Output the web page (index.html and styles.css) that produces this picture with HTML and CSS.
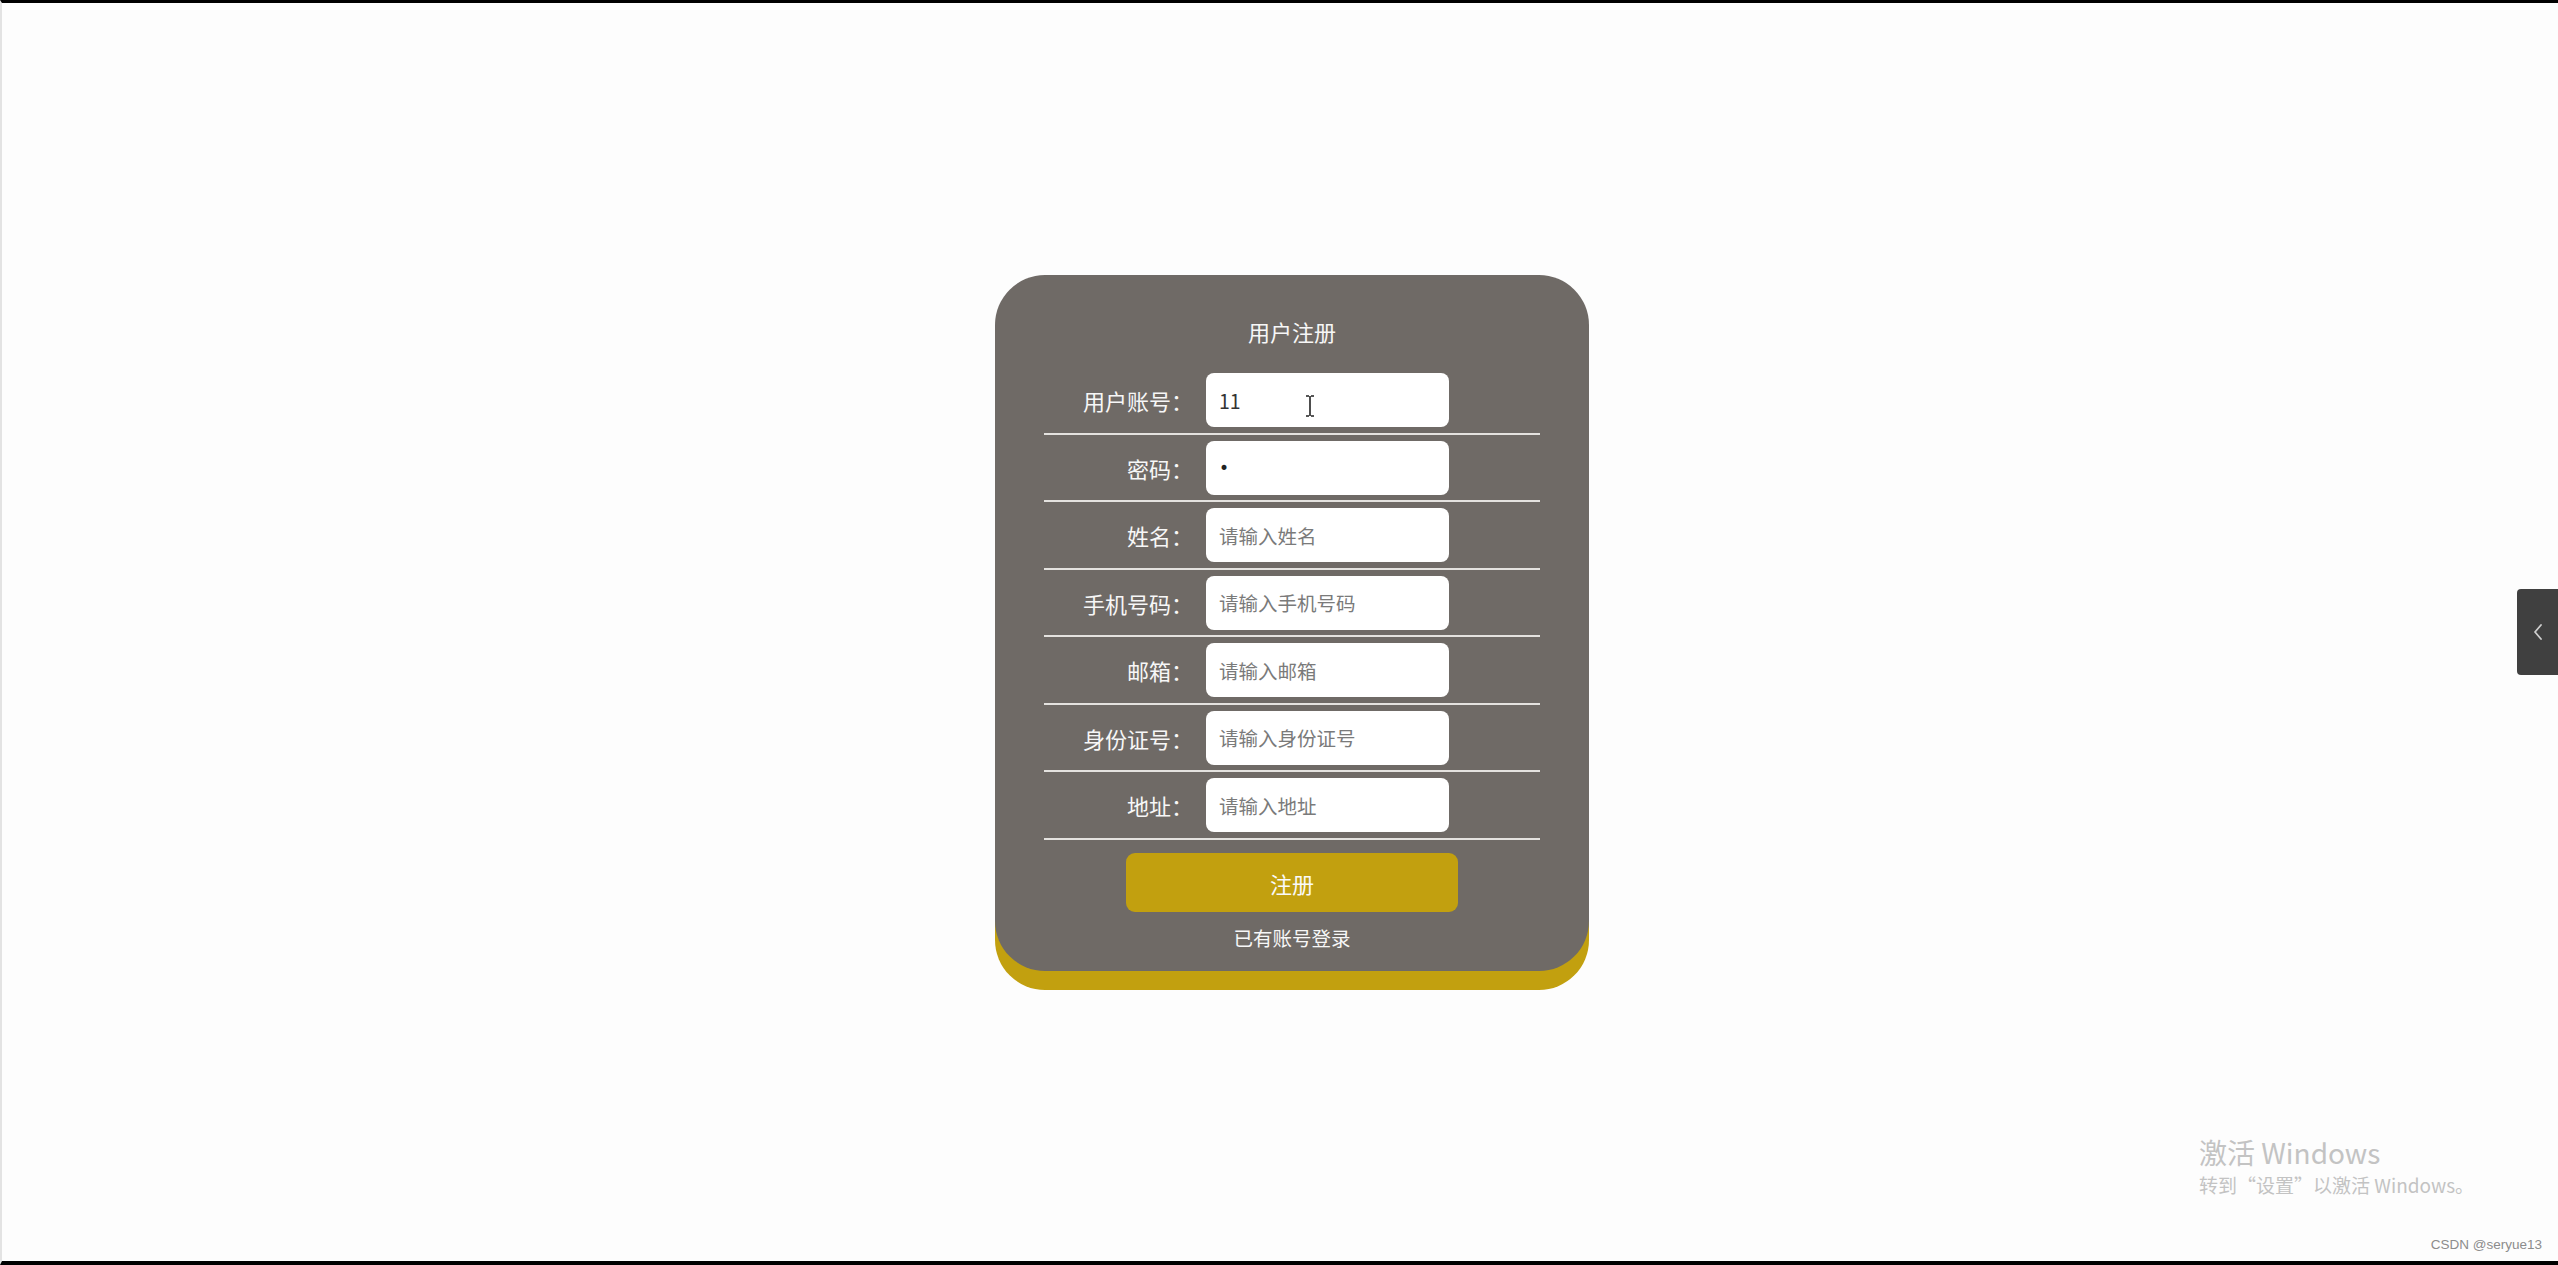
FILE: index.html
```html
<!DOCTYPE html>
<html lang="zh-CN">
<head>
<meta charset="utf-8">
<title>用户注册</title>
<link rel="stylesheet" href="styles.css">
</head>
<body>
<div class="screen">
  <div class="card">
    <h1 class="title">用户注册</h1>
    <form class="form">
      <div class="row">
        <label class="label">用户账号：</label>
        <div class="field">
          <input class="input" type="text" value="11">
          <svg class="ibeam" width="10" height="22" viewBox="0 0 10 22"><path d="M1 1h3M6 1h3M5 1v20M1 21h3M6 21h3" stroke="#222" stroke-width="1.6" fill="none"/></svg>
        </div>
      </div>
      <div class="row">
        <label class="label">密码：</label>
        <div class="field"><input class="input input-pass" type="password" value="1"></div>
      </div>
      <div class="row">
        <label class="label">姓名：</label>
        <div class="field"><input class="input" type="text" placeholder="请输入姓名"></div>
      </div>
      <div class="row">
        <label class="label">手机号码：</label>
        <div class="field"><input class="input" type="text" placeholder="请输入手机号码"></div>
      </div>
      <div class="row">
        <label class="label">邮箱：</label>
        <div class="field"><input class="input" type="text" placeholder="请输入邮箱"></div>
      </div>
      <div class="row">
        <label class="label">身份证号：</label>
        <div class="field"><input class="input" type="text" placeholder="请输入身份证号"></div>
      </div>
      <div class="row">
        <label class="label">地址：</label>
        <div class="field"><input class="input" type="text" placeholder="请输入地址"></div>
      </div>
      <button class="submit" type="button">注册</button>
      <p class="login">已有账号登录</p>
    </form>
  </div>

  <div class="side-tab">
    <svg width="12" height="18" viewBox="0 0 12 18"><path d="M9 2L3 9l6 7" stroke="#cfcfcf" stroke-width="1.8" fill="none" stroke-linecap="round" stroke-linejoin="round"/></svg>
  </div>

  <div class="activate">
    <div class="act-title">激活 Windows</div>
    <div class="act-sub">转到“设置”以激活 Windows。</div>
  </div>

  <div class="csdn">CSDN @seryue13</div>
</div>
</body>
</html>
```
FILE: styles.css
```css
html, body {
  margin: 0;
  padding: 0;
  overflow: hidden;
}

body {
  font-family: "Noto Sans CJK SC", "Noto Sans", sans-serif;
}

.screen {
  position: relative;
  box-sizing: border-box;
  height: 1265px;
  border-top: 3px solid #000;
  border-bottom: 4px solid #000;
  border-left: 2px solid #e3e3e3;
  background: #fdfdfd;
  padding-top: 272px;
}

.card {
  box-sizing: border-box;
  width: 594px;
  margin-left: 993px;
  padding: 41px 49px 18px;
  background: #6f6a66;
  border-radius: 50px;
  box-shadow: 0 19px 0 0 #c2a00f;
  color: #f7f7f7;
}

.title {
  margin: 0 0 27px;
  font-size: 22px;
  font-weight: normal;
  line-height: 30px;
  text-align: center;
}

.form {
  display: flex;
  flex-direction: column;
}

.row {
  display: flex;
  align-items: center;
  padding-bottom: 5.5px;
  margin-bottom: 6px;
  border-bottom: 2px solid #e4e2df;
}

.label {
  width: 149px;
  flex: none;
  text-align: right;
  font-size: 22px;
  line-height: 30px;
}

.field {
  position: relative;
  margin-left: 13px;
}

.input {
  display: block;
  box-sizing: border-box;
  width: 243px;
  height: 54px;
  padding: 0 13px;
  border: none;
  border-radius: 8px;
  background: #fff;
  font-family: "Noto Sans CJK SC", "Noto Sans", sans-serif;
  font-size: 19.5px;
  color: #333;
  outline: none;
}

.input-pass {
  font-family: "DejaVu Sans", sans-serif;
  font-size: 17px;
  color: #222;
}

.input::placeholder {
  color: #7a7a7a;
}

.ibeam {
  position: absolute;
  left: 99px;
  top: 22px;
}

.submit {
  align-self: center;
  width: 332px;
  height: 59px;
  margin-top: 7.5px;
  border: none;
  border-radius: 9px;
  background: #c2a00f;
  color: #fafafa;
  font-family: "Noto Sans CJK SC", "Noto Sans", sans-serif;
  font-size: 22px;
}

.login {
  margin: 11px 0 0;
  font-size: 19.5px;
  line-height: 30px;
  text-align: center;
}

.side-tab {
  position: absolute;
  right: 0;
  top: 586px;
  width: 41px;
  height: 86px;
  border-radius: 4px 0 0 4px;
  background: #404040;
  display: flex;
  align-items: center;
  justify-content: center;
}

.activate {
  position: absolute;
  left: 2197px;
  top: 1131px;
  color: #c3c3c3;
  font-family: "Noto Sans CJK SC", "Open Sans", sans-serif;
}

.act-title {
  font-size: 28px;
  line-height: 36px;
}

.act-sub {
  font-size: 19px;
  line-height: 30px;
}

.csdn {
  position: absolute;
  right: 16px;
  bottom: 9px;
  font-family: "Liberation Sans", Arial, sans-serif;
  font-size: 13.5px;
  color: #8c8c8c;
}
```
